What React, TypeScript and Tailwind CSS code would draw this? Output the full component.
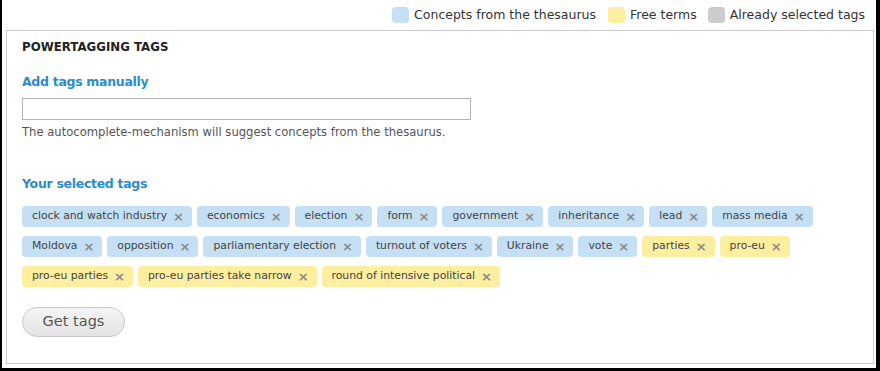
import React from "react";

const rows: { label: string; yellow?: boolean }[][] = [
  [
    { label: "clock and watch industry" },
    { label: "economics" },
    { label: "election" },
    { label: "form" },
    { label: "government" },
    { label: "inheritance" },
    { label: "lead" },
    { label: "mass media" },
  ],
  [
    { label: "Moldova" },
    { label: "opposition" },
    { label: "parliamentary election" },
    { label: "turnout of voters" },
    { label: "Ukraine" },
    { label: "vote" },
    { label: "parties", yellow: true },
    { label: "pro-eu", yellow: true },
  ],
  [
    { label: "pro-eu parties", yellow: true },
    { label: "pro-eu parties take narrow", yellow: true },
    { label: "round of intensive political", yellow: true },
  ],
];

function Tag({ label, yellow }: { label: string; yellow?: boolean }) {
  return (
    <span
      className={`inline-flex h-[21px] items-center rounded-[4px] pl-[10px] pr-[8px] text-[10.8px] text-[#444] ${
        yellow ? "bg-[#fdeea0]" : "bg-[#c5dff4]"
      }`}
    >
      {label}
      <span className="ml-[6px] text-[13px] font-bold leading-none text-[#888]">×</span>
    </span>
  );
}

export default function App() {
  return (
    <div
      className="h-[371px] w-[880px] border-b-[3px] border-l-2 border-r-4 border-black bg-white"
      style={{ fontFamily: '"DejaVu Sans", Verdana, sans-serif' }}
    >
      <div className="flex h-[30px] items-center justify-end pr-[11px] text-[12.5px] text-[#333]">
        <span className="mr-[5px] h-4 w-[17px] rounded-[4px] bg-[#c5dff4]" />
        <span>Concepts from the thesaurus</span>
        <span className="ml-[12px] mr-[5px] h-4 w-[17px] rounded-[4px] bg-[#fdeea0]" />
        <span>Free terms</span>
        <span className="ml-[11px] mr-[5px] h-4 w-[17px] rounded-[4px] bg-[#cccccc]" />
        <span>Already selected tags</span>
      </div>
      <div className="ml-[4px] mr-[2px] h-[334px] border border-[#cccccc] px-[15px] pt-[8px]">
        <div className="text-[11.8px] font-bold uppercase leading-[16px] text-[#222]">
          Powertagging tags
        </div>
        <div className="mt-[19px] text-[12.5px] font-bold leading-[16px] tracking-[-0.3px] text-[#2a8ccb]">
          Add tags manually
        </div>
        <input
          type="text"
          className="mt-[8px] block h-[22px] w-[449px] border border-[#b5b5b5] bg-white outline-none"
        />
        <div className="mt-[5px] text-[11.6px] leading-[14px] text-[#555]">
          The autocomplete-mechanism will suggest concepts from the thesaurus.
        </div>
        <div className="mt-[37px] text-[12.5px] font-bold leading-[16px] tracking-[-0.3px] text-[#2a8ccb]">
          Your selected tags
        </div>
        <div className="mt-[14px] flex flex-col gap-[9px]">
          {rows.map((row, i) => (
            <div key={i} className="flex gap-[5px]">
              {row.map((t) => (
                <Tag key={t.label} label={t.label} yellow={t.yellow} />
              ))}
            </div>
          ))}
        </div>
        <button className="mt-[20px] h-[30px] w-[103px] rounded-full border border-[#c8c8c8] bg-gradient-to-b from-[#f6f6f6] to-[#e3e3e3] text-[14.5px] text-[#555]">
          Get tags
        </button>
      </div>
    </div>
  );
}
